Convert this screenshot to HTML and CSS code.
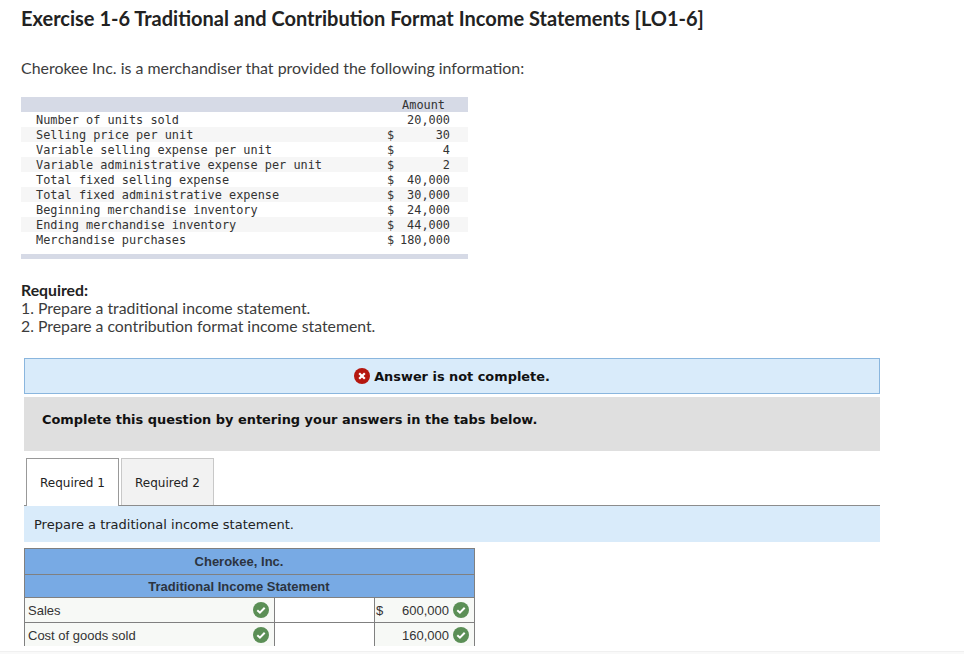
FILE: index.html
```html
<!DOCTYPE html>
<html lang="en">
<head>
    <meta charset="UTF-8">
    <title>Exercise 1-6</title>
    <link rel="stylesheet" href="styles.css">
</head>
<body>
    <h1>Exercise 1-6 Traditional and Contribution Format Income Statements [LO1-6]</h1>
    <p class="intro">Cherokee Inc. is a merchandiser that provided the following information:</p>

    <table class="info">
        <colgroup>
            <col class="col-name">
            <col class="col-cur">
            <col>
        </colgroup>
        <thead>
            <tr><th></th><th></th><th class="amt head">Amount</th></tr>
        </thead>
        <tbody>
            <tr><td class="name">Number of units sold</td><td></td><td class="amt">20,000</td></tr>
            <tr><td class="name">Selling price per unit</td><td>$</td><td class="amt">30</td></tr>
            <tr><td class="name">Variable selling expense per unit</td><td>$</td><td class="amt">4</td></tr>
            <tr><td class="name">Variable administrative expense per unit</td><td>$</td><td class="amt">2</td></tr>
            <tr><td class="name">Total fixed selling expense</td><td>$</td><td class="amt">40,000</td></tr>
            <tr><td class="name">Total fixed administrative expense</td><td>$</td><td class="amt">30,000</td></tr>
            <tr><td class="name">Beginning merchandise inventory</td><td>$</td><td class="amt">24,000</td></tr>
            <tr><td class="name">Ending merchandise inventory</td><td>$</td><td class="amt">44,000</td></tr>
            <tr><td class="name">Merchandise purchases</td><td>$</td><td class="amt">180,000</td></tr>
        </tbody>
    </table>
    <div class="info-foot"></div>

    <div class="required">
        <strong>Required:</strong><br>
        1. Prepare a traditional income statement.<br>
        2. Prepare a contribution format income statement.
    </div>

    <div class="panel">
        <div class="not-complete">
            <svg class="icon" viewBox="0 0 16 16">
                <circle cx="8" cy="8" r="8" fill="#b5170f"/>
                <path d="M5.2 5.2l5.6 5.6M10.8 5.2l-5.6 5.6" stroke="#fff" stroke-width="2.2"/>
            </svg>
            Answer is not complete.
        </div>
        <div class="complete-msg">Complete this question by entering your answers in the tabs below.</div>

        <div class="tabs">
            <div class="tab active">Required 1</div>
            <div class="tab">Required 2</div>
        </div>
        <div class="tab-title">Prepare a traditional income statement.</div>

        <div class="statement-wrap">
            <table class="statement">
                <colgroup>
                    <col class="col-label">
                    <col class="col-blank">
                    <col>
                </colgroup>
                <tr class="top"><th colspan="3">Cherokee, Inc.</th></tr>
                <tr class="top second"><th colspan="3">Traditional Income Statement</th></tr>
                <tr>
                    <td class="label">Sales
                        <svg class="check" viewBox="0 0 16 16"><circle cx="8" cy="8" r="8" fill="#5b8f56"/><path d="M4.3 8.3l2.6 2.4 4.8-4.9" fill="none" stroke="#fff" stroke-width="2"/></svg>
                    </td>
                    <td class="blank"></td>
                    <td class="value"><span class="dollar">$</span>600,000
                        <svg class="check" viewBox="0 0 16 16"><circle cx="8" cy="8" r="8" fill="#5b8f56"/><path d="M4.3 8.3l2.6 2.4 4.8-4.9" fill="none" stroke="#fff" stroke-width="2"/></svg>
                    </td>
                </tr>
                <tr>
                    <td class="label">Cost of goods sold
                        <svg class="check" viewBox="0 0 16 16"><circle cx="8" cy="8" r="8" fill="#5b8f56"/><path d="M4.3 8.3l2.6 2.4 4.8-4.9" fill="none" stroke="#fff" stroke-width="2"/></svg>
                    </td>
                    <td class="blank"></td>
                    <td class="value">160,000
                        <svg class="check" viewBox="0 0 16 16"><circle cx="8" cy="8" r="8" fill="#5b8f56"/><path d="M4.3 8.3l2.6 2.4 4.8-4.9" fill="none" stroke="#fff" stroke-width="2"/></svg>
                    </td>
                </tr>
            </table>
        </div>
    </div>
    <div class="page-edge"></div>
</body>
</html>
```

FILE: styles.css
```css
html, body {
    height: 654px;
    overflow: hidden;
}
body {
    margin: 0;
    padding: 0 0 0 21px;
    box-sizing: border-box;
    background: #fff;
    color: #3c3c3c;
    font-family: Lato, "Open Sans", sans-serif;
}
h1 {
    margin: 0;
    padding-top: 6px;
    height: 24px;
    font-size: 20px;
    line-height: 24px;
    font-weight: 700;
    color: #222;
}
.intro {
    margin: 26px 0 0;
    height: 24px;
    font-size: 15.95px;
    line-height: 24px;
}
.info {
    margin-top: 17px;
    width: 447px;
    border-collapse: collapse;
    table-layout: fixed;
    font-family: "DejaVu Sans Mono", monospace;
    font-size: 11.88px;
    color: #333;
}
.col-name {
    width: 366px;
}
.col-cur {
    width: 13px;
}
.info th, .info td {
    height: 15px;
    padding: 2px 0 0;
    box-sizing: border-box;
    line-height: 13px;
    font-weight: 400;
    white-space: nowrap;
}
.info thead tr {
    background: #d6dae6;
}
.info tbody tr:nth-child(even) {
    background: #f6f6f6;
}
.info .name {
    padding-left: 15px;
}
.info .amt {
    text-align: right;
    padding-right: 18px;
}
.info .head {
    padding-right: 23px;
}
.info-foot {
    width: 447px;
    height: 5px;
    margin-top: 7px;
    background: #d6dae6;
}
.required {
    margin-top: 22px;
    font-size: 15.8px;
    line-height: 18px;
}
.required strong {
    color: #222;
}
.panel {
    margin: 23px 0 0 3px;
    width: 856px;
}
.not-complete {
    box-sizing: border-box;
    height: 36px;
    display: flex;
    align-items: center;
    justify-content: center;
    gap: 4px;
    background: #d9ebfa;
    border: 1px solid #8ab6de;
    font-family: "DejaVu Sans", Verdana, sans-serif;
    font-size: 12.9px;
    font-weight: 700;
    color: #111;
}
.icon {
    width: 16px;
    height: 16px;
}
.complete-msg {
    box-sizing: border-box;
    height: 54px;
    margin-top: 3px;
    padding-left: 18px;
    background: #dfdfdf;
    font-family: "DejaVu Sans", Verdana, sans-serif;
    font-size: 12.93px;
    font-weight: 700;
    line-height: 46px;
    color: #111;
}
.tabs {
    display: flex;
    gap: 2px;
    margin-top: 7px;
    padding-left: 2px;
    border-bottom: 1px solid #8c8c8c;
}
.tab {
    box-sizing: border-box;
    width: 93px;
    height: 47px;
    background: #f2f2f2;
    border: 1px solid #c8c8c8;
    border-bottom: 0;
    font-family: "DejaVu Sans", Verdana, sans-serif;
    font-size: 12px;
    line-height: 49px;
    text-align: center;
    color: #222;
}
.tab.active {
    height: 48px;
    margin-bottom: -1px;
    background: #fff;
    border-color: #999;
}
.tab-title {
    box-sizing: border-box;
    height: 36px;
    padding-left: 10px;
    background: #d9ebfa;
    font-family: "DejaVu Sans", Verdana, sans-serif;
    font-size: 13px;
    line-height: 38px;
    color: #222;
}
.statement-wrap {
    margin-top: 6px;
    height: 98px;
    overflow: hidden;
}
.statement {
    width: 451px;
    border-collapse: collapse;
    table-layout: fixed;
    font-family: "Liberation Sans", Arial, sans-serif;
    font-size: 13px;
    color: #333;
}
.col-label {
    width: 250px;
}
.col-blank {
    width: 100px;
}
.statement th, .statement td {
    border: 1px solid #808080;
    padding: 0;
}
.statement .top th {
    height: 25px;
    padding-right: 21px;
    background: #78aae4;
    font-weight: 700;
    text-align: center;
    color: #2c3440;
}
.statement .second th {
    height: 22px;
}
.statement td {
    height: 24px;
    position: relative;
    background: #f7f9f6;
}
.statement .label {
    padding-left: 3px;
}
.statement .blank {
    background: #fff;
}
.statement .value {
    padding-right: 25px;
    text-align: right;
}
.dollar {
    float: left;
    padding-left: 1px;
}
.check {
    position: absolute;
    right: 5px;
    top: 4px;
    width: 16px;
    height: 16px;
}
.page-edge {
    height: 3px;
    margin: 5px 0 0 -21px;
    background: #f9f9f9;
    border-top: 1px solid #f0f0f0;
}
```
